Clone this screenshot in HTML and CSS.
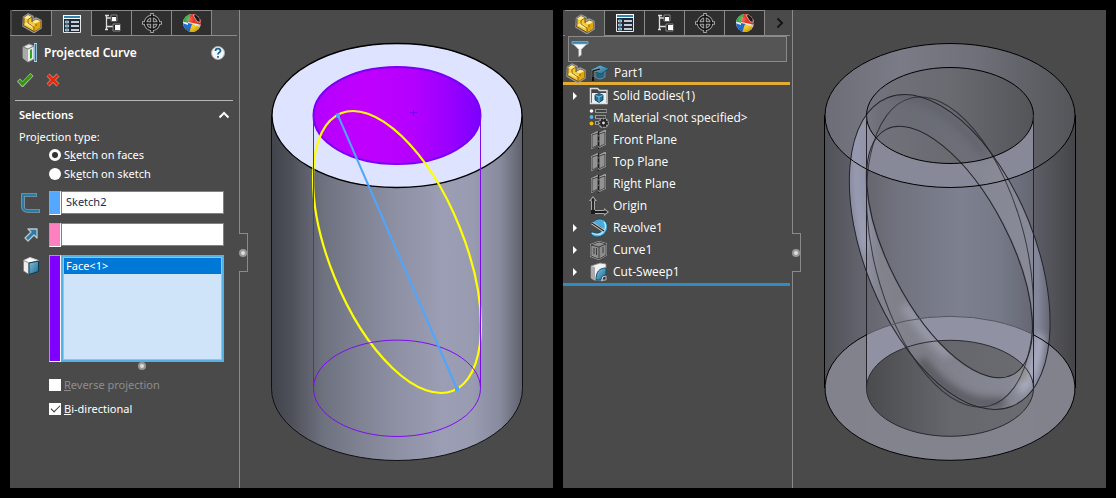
FILE: index.html
```html
<!DOCTYPE html>
<html lang="en">
<head>
    <meta charset="UTF-8" />
    <title>Projected Curve</title>
    <link rel="stylesheet" href="styles.css">
</head>
<body>

<!-- Shared icons -->
<svg class="sprite" aria-hidden="true">
    <defs>
        <linearGradient id="gold" x1="0" y1="0" x2="1" y2="1">
            <stop offset="0" stop-color="#ffe477" />
            <stop offset="1" stop-color="#f0b820" />
        </linearGradient>
        <linearGradient id="steel" x1="0" y1="0" x2="1" y2="1">
            <stop offset="0" stop-color="#7cc4e4" />
            <stop offset="1" stop-color="#1f668b" />
        </linearGradient>
        <radialGradient id="shine" cx="0.35" cy="0.3" r="0.7">
            <stop offset="0" stop-color="#fff" stop-opacity="0.3" />
            <stop offset="0.4" stop-color="#fff" stop-opacity="0" />
            <stop offset="1" stop-color="#000" stop-opacity="0.2" />
        </radialGradient>
        <clipPath id="ball"><circle cx="10" cy="10" r="9" /></clipPath>
    </defs>
    <symbol id="i-part" viewBox="0 0 20 20">
        <path d="M1.500 4L6 1l5 2.500v3L14 5l5 2.500V15l-7 4.500L1 13z" fill="#999" stroke="#999" stroke-width="1.500" stroke-linejoin="round" />
        <path d="M2 4.500L6 2l4 2v5l4-2.500L18.500 8v6.500L12 18.500 1.500 12.500l.5-2z" fill="#f7c633" stroke="#4a3605" stroke-width="0.800" stroke-linejoin="round" />
        <path d="M2 4.500L6 2l4 2-4 2.500zM10 9l4-2.500L18.500 8 14 10.500zM2 11l4-2 6 3.500-2 2z" fill="#ffec8e" />
        <path d="M14 10.500L18.500 8v6.500L12 18.500V14z" fill="#e2a614" />
        <path d="M6 6.500V10l6 4v4.500M14 10.500V13M6 6.500L10 4" fill="none" stroke="#6e500a" stroke-width="0.800" />
    </symbol>
    <symbol id="i-props" viewBox="0 0 20 20">
        <path d="M1.500 1.500h17v17h-17z" fill="#1d2b38" stroke="#e8e8e8" />
        <path d="M1 1h18v4H1z" fill="#fff" />
        <path d="M2 2h16v2H2z" fill="#2b86b4" />
        <path d="M3.500 7h3v2h-3zm0 4h3v2h-3zm0 4h3v2h-3z" fill="#2b86b4" stroke="#fff" stroke-width="0.600" />
        <path d="M9 8h8M9 12h8M9 16h8" stroke="#fff" stroke-width="1.500" />
    </symbol>
    <symbol id="i-config" viewBox="0 0 20 20">
        <path d="M3 2.500h4M3 16.500h3M4.500 2v15M5 5h5M5 13.500h6" stroke="#ddd" stroke-width="1.300" fill="none" />
        <path d="M9 2h6v6H9zM11 11h7v7h-7z" fill="#222" stroke="#888" />
        <path d="M10 4h4v4h-4zM13 12h5v5h-5z" fill="#fff" />
    </symbol>
    <symbol id="i-target" viewBox="0 0 20 20">
        <g fill="none" stroke="#a5a5a5" stroke-width="3.600">
            <circle cx="10" cy="10" r="6.500" />
            <path d="M10 0v20M0 10h20" />
        </g>
        <g fill="none" stroke="#111" stroke-width="1.600">
            <circle cx="10" cy="10" r="6.500" />
            <path d="M10 1v18M1 10h18" />
        </g>
    </symbol>
    <symbol id="i-ball" viewBox="0 0 20 20">
        <g clip-path="url(#ball)">
            <path d="M0 0h20v20H0z" fill="#f2f2f2" />
            <path d="M0 9V0h9L6 10z" fill="#2fa53c" />
            <path d="M9 0h11v12l-9-2-5-1z" fill="#e8301c" />
            <path d="M6 10l5 1-3 9-8-6V9z" fill="#1c66d0" />
            <path d="M10 11l10 4-4 5H7z" fill="#ffd012" />
            <path d="M0 8.500l6 1.500v2L0 10z" fill="#f5f5f5" />
            <path d="M11 2l3-.500 4 4 0 4-3-1z" fill="#111" stroke="#ddd" stroke-width="0.700" />
        </g>
        <circle cx="10" cy="10" r="9" fill="url(#shine)" />
    </symbol>
    <symbol id="i-plane" viewBox="0 0 20 20">
        <path d="M3 5l6-3v12l-6 4zM10 4l6-3v13l-6 3z" fill="#8d8d8d" stroke="#a8a8a8" stroke-width="2" stroke-linejoin="round" />
        <path d="M3 5l6-2v12l-6 3zM10 4l6-2v12l-6 3z" fill="#929292" stroke="#333" stroke-width="0.800" />
        <path d="M9.500 1v18" stroke="#1c1c1c" stroke-width="1.200" stroke-dasharray="4 1.500" />
    </symbol>
</svg>

<main class="desktop">
    <!-- Property manager -->
    <section class="window">
        <div class="panel">
            <nav class="tabs">
                <button type="button" class="tab" aria-label="Feature tree"><svg><use href="#i-part" /></svg></button>
                <button type="button" class="tab active" aria-label="Properties"><svg><use href="#i-props" /></svg></button>
                <button type="button" class="tab" aria-label="Configurations"><svg><use href="#i-config" /></svg></button>
                <button type="button" class="tab" aria-label="Dimensions"><svg><use href="#i-target" /></svg></button>
                <button type="button" class="tab" aria-label="Appearance"><svg><use href="#i-ball" /></svg></button>
            </nav>

            <form class="properties">
                <header class="title-row">
                    <svg class="title-icon" viewBox="0 0 16 20">
                        <path d="M1 4l6-3 5 2v13l-6 3-5-4z" fill="#e9e9e9" stroke="#999" />
                        <path d="M1 4l5 2v13l-5-4z" fill="#aaa" />
                        <path d="M1 4l5 2 6-3" fill="none" stroke="#777" />
                        <path d="M8 7l2-1v9l-2 1z" fill="#33a421" />
                        <path d="M13.500 0v19" stroke="#b5d8e8" stroke-width="3" />
                        <path d="M13.500 1v17" stroke="#216f9b" stroke-width="1.500" />
                    </svg>
                    <h1>Projected Curve</h1>
                    <button type="button" class="plain" aria-label="Help">
                        <svg class="help-icon" viewBox="0 0 14 14">
                            <circle cx="7" cy="7" r="6.500" fill="#f2f7fa" stroke="#aaa" />
                            <path d="M4.500 5c0-3 5-3 5-.3C9.500 6.500 7 6.300 7 8.500M7 10v1.800" fill="none" stroke="#17648f" stroke-width="1.800" />
                        </svg>
                    </button>
                </header>

                <div class="confirm-row">
                    <button type="button" class="plain" aria-label="OK">
                        <svg class="ok-icon" viewBox="0 0 17 15">
                            <path d="M1.500 8l4 4.500L15 2.500" fill="none" stroke="#a9b7a3" stroke-width="4.400" />
                            <path d="M2 8.500l3.500 3.500L14.500 3" fill="none" stroke="#2d9a08" stroke-width="2.800" />
                        </svg>
                    </button>
                    <button type="button" class="plain" aria-label="Cancel">
                        <svg class="cancel-icon" viewBox="0 0 14 14">
                            <path d="M2 2l10 10M12 2L2 12" stroke="#b9a29e" stroke-width="4" />
                            <path d="M2 2l10 10M12 2L2 12" stroke="#ea2806" stroke-width="2.800" />
                        </svg>
                    </button>
                </div>

                <div class="group-head">
                    <h2>Selections</h2>
                    <button type="button" class="plain" aria-label="Collapse">
                        <svg class="chevron" viewBox="0 0 12 8"><path d="M1.500 6.500L6 2l4.500 4.500" fill="none" stroke="#fff" stroke-width="2" /></svg>
                    </button>
                </div>

                <fieldset class="options">
                    <legend>Projection type:</legend>
                    <label><input type="radio" name="type" checked /><span>S<u>k</u>etch on faces</span></label>
                    <label><input type="radio" name="type" /><span>Sk<u>e</u>tch on sketch</span></label>
                </fieldset>

                <div class="pick">
                    <svg class="pick-icon" viewBox="0 0 20 20">
                        <path d="M16 2H2v11q0 5 5 5h12" fill="none" stroke="#9aabb3" stroke-width="3.600" />
                        <path d="M15.500 2H2v11q0 5 5 5h11.500" fill="none" stroke="#2a7ca5" stroke-width="2.400" />
                    </svg>
                    <span class="swatch blue"></span>
                    <input type="text" value="Sketch2" aria-label="Sketch to project" />
                </div>
                <div class="pick">
                    <svg class="pick-icon small" viewBox="0 0 16 16">
                        <path d="M2 12l6-6-3-3h9v9l-3-3-6 6z" fill="#2a7ca5" stroke="#b9c9d0" stroke-width="1.300" stroke-linejoin="round" />
                    </svg>
                    <span class="swatch pink"></span>
                    <input type="text" aria-label="Direction of projection" />
                </div>
                <div class="pick tall">
                    <svg class="pick-icon small" viewBox="0 0 16 18">
                        <path d="M.5 3.500L7 .500l8.500 3L6 6z" fill="#fff" stroke="#ccc" />
                        <path d="M.5 3.500L6 6v11.500L.5 14z" fill="#eee" stroke="#777" stroke-width="0.700" />
                        <path d="M6 6l9.500-2v10.500L6 17.500z" fill="url(#steel)" stroke="#12384d" />
                    </svg>
                    <span class="swatch purple"></span>
                    <select size="6" aria-label="Projection faces">
                        <option selected>Face&lt;1&gt;</option>
                    </select>
                </div>
                <div class="grip-row"><span class="dot"></span></div>

                <div class="checks">
                    <label class="disabled"><input type="checkbox" disabled /><span><u>R</u>everse projection</span></label>
                    <label><input type="checkbox" checked /><span><u>B</u>i-directional</span></label>
                </div>
            </form>
            <button type="button" class="splitter" aria-label="Hide panel"><span class="dot"></span></button>
        </div>

        <svg class="scene" viewBox="240 10 313 478" role="img" aria-label="Hollow cylinder with projected sketch">
            <defs>
                <linearGradient id="solid">
                    <stop offset="0" stop-color="#42444c" />
                    <stop offset="0.08" stop-color="#4e5059" />
                    <stop offset="0.2" stop-color="#6d707d" />
                    <stop offset="0.34" stop-color="#7e8191" />
                    <stop offset="0.5" stop-color="#8e91a4" />
                    <stop offset="0.68" stop-color="#9b9eb4" />
                    <stop offset="0.8" stop-color="#999cb1" />
                    <stop offset="0.91" stop-color="#888b9e" />
                    <stop offset="1" stop-color="#5e606b" />
                </linearGradient>
                <linearGradient id="bore">
                    <stop offset="0" stop-color="#b400ff" />
                    <stop offset="0.3" stop-color="#c000ff" />
                    <stop offset="0.6" stop-color="#b400ff" />
                    <stop offset="0.8" stop-color="#9c00ff" />
                    <stop offset="1" stop-color="#7c00ff" />
                </linearGradient>
            </defs>
            <path d="M271.500 115.500V388.500A125.500 72 0 0 0 522.500 388.500V115.500z" fill="url(#solid)" stroke="#111" />
            <ellipse cx="397" cy="115.500" rx="125" ry="72" fill="#dee4ff" stroke="#000" stroke-width="1.300" />
            <ellipse cx="397" cy="115.500" rx="83.500" ry="48.500" fill="url(#bore)" stroke="#7a00f5" stroke-width="2" />
            <path d="M410 112.500h7M413.500 109v7" stroke="#7a00f5" />
            <ellipse cx="397" cy="252" rx="149.600" ry="67.400" transform="rotate(68 397 252)" fill="none" stroke="#ff0" stroke-width="2.200" />
            <g fill="none" stroke="#7d0cf0">
                <ellipse cx="397" cy="388.300" rx="83.500" ry="48.200" />
                <path d="M313.500 115V388M480.500 115V388" />
            </g>
            <path d="M338 115.500L457 389" stroke="#4da6ff" stroke-width="2" />
            <path d="M336 113.500h4v4h-4zM455 387h4v4h-4z" fill="#4da6ff" />
        </svg>
    </section>

    <!-- Feature tree -->
    <section class="window">
        <div class="panel">
            <nav class="tabs">
                <button type="button" class="tab active" aria-label="Feature tree"><svg><use href="#i-part" /></svg></button>
                <button type="button" class="tab" aria-label="Properties"><svg><use href="#i-props" /></svg></button>
                <button type="button" class="tab" aria-label="Configurations"><svg><use href="#i-config" /></svg></button>
                <button type="button" class="tab" aria-label="Dimensions"><svg><use href="#i-target" /></svg></button>
                <button type="button" class="tab" aria-label="Appearance"><svg><use href="#i-ball" /></svg></button>
                <button type="button" class="plain more" aria-label="More tabs">
                    <svg viewBox="0 0 8 12"><path d="M1.500 1.500L6 6l-4.500 4.500" fill="none" stroke="#151515" stroke-width="2" /></svg>
                </button>
            </nav>

            <div class="filter">
                <svg viewBox="0 0 18 18">
                    <path d="M1 3l6.500 6.500V17l3-2V9.500L17 3z" fill="#eee" stroke="#888" stroke-width="0.600" />
                    <path d="M1 1.500h16V4H1z" fill="#2b86b4" stroke="#9cc6da" stroke-width="0.600" />
                    <path d="M5 5h8L9 9z" fill="#fff" />
                </svg>
                <input type="text" aria-label="Filter tree" />
            </div>

            <div class="root">
                <svg><use href="#i-part" /></svg>
                <svg viewBox="0 0 20 20">
                    <path d="M5 8v6q5 4 10 0V8z" fill="#28647f" stroke="#8fb3c2" stroke-width="0.600" />
                    <path d="M0 7l10-5 9 3.500L11 11z" fill="url(#steel)" stroke="#15465e" stroke-width="0.700" />
                    <path d="M10 6L3 8v8" fill="none" stroke="#888" stroke-width="2.400" />
                    <path d="M10 6L3 8v8" fill="none" stroke="#111" stroke-width="1.300" />
                    <path d="M2 14h2v4H2z" fill="#111" />
                </svg>
                <span>Part1</span>
            </div>

            <ul class="tree">
                <li>
                    <button type="button" class="arrow" aria-label="Expand Solid Bodies"></button>
                    <svg viewBox="0 0 20 20">
                        <path d="M1.500 17.500v-15h7l2 2h7.500v13z" fill="#444" stroke="#ddd" stroke-width="1.500" />
                        <path d="M3 7h14v10H3z" fill="#e9eef0" />
                        <path d="M6 9l4-1.500L14 9v5l-4 2.500L6 14z" fill="#1f7299" stroke="#0e3448" stroke-width="0.800" />
                        <path d="M6.500 9.500L10 11l3.500-1.500M10 11v5" fill="none" stroke="#9bd0e5" stroke-width="0.800" />
                    </svg>
                    <span>Solid Bodies(1)</span>
                </li>
                <li>
                    <svg viewBox="0 0 20 20">
                        <path d="M6 3h12M6 9h11M6 15h6" stroke="#aaa" stroke-width="3.400" />
                        <path d="M7 3h10.500M7 9h9.500M7 15h5" stroke="#222" stroke-width="1.600" />
                        <circle cx="2.500" cy="3" r="1.800" fill="#fff" />
                        <circle cx="2.500" cy="9" r="1.900" fill="#58b4e0" />
                        <circle cx="2.500" cy="15.500" r="2" fill="#f3b71f" />
                        <circle cx="14.500" cy="15" r="3" fill="none" stroke="#aaa" stroke-width="4.600" />
                        <circle cx="14.500" cy="15" r="3.800" fill="none" stroke="#222" stroke-width="1.600" stroke-dasharray="1.800 1.200" />
                        <circle cx="14.500" cy="15" r="2.400" fill="#ddd" stroke="#222" stroke-width="2" />
                    </svg>
                    <span>Material &lt;not specified&gt;</span>
                </li>
                <li><svg><use href="#i-plane" /></svg><span>Front Plane</span></li>
                <li><svg><use href="#i-plane" /></svg><span>Top Plane</span></li>
                <li><svg><use href="#i-plane" /></svg><span>Right Plane</span></li>
                <li>
                    <svg viewBox="0 0 20 20">
                        <path d="M4 3v13h12" fill="none" stroke="#aaa" stroke-width="4" />
                        <path d="M4 0l4 5H0zM20 16l-5 4v-8z" fill="#aaa" />
                        <path d="M4 4v12h12" fill="none" stroke="#1c1c1c" stroke-width="1.800" />
                        <path d="M4 1.500l2 3H2zM18.500 16l-3 2v-4zM2 14h4v4H2z" fill="#1c1c1c" />
                    </svg>
                    <span>Origin</span>
                </li>
                <li>
                    <button type="button" class="arrow" aria-label="Expand Revolve1"></button>
                    <svg viewBox="0 0 20 20">
                        <path d="M4 4q5-5 11-2 5 4 3 10-3 7-10 7-5 0-7-5l7 1q4 0 5-3 0-3-3-4L4 6z" fill="#4cabdb" stroke="#0f4a68" stroke-width="0.800" />
                        <path d="M3 15q7 4 12-2 3-5 0-9" fill="none" stroke="#b4e4f8" stroke-width="1.400" />
                        <path d="M3 5l12 8" stroke="#ccc" stroke-width="3" />
                        <path d="M3 5l12 8" stroke="#222" stroke-width="1.200" />
                    </svg>
                    <span>Revolve1</span>
                </li>
                <li>
                    <button type="button" class="arrow" aria-label="Expand Curve1"></button>
                    <svg viewBox="0 0 20 20">
                        <path d="M2 5l8-3 7 2v11l-7 4-8-3z" fill="#8c8c8c" stroke="#aaa" stroke-width="2" stroke-linejoin="round" />
                        <path d="M2 5l8-3 7 2v11l-7 4-8-3zM2 5l8 2 7-3M10 7v12M5 8v6M7.500 8v7M14 7v6" fill="none" stroke="#333" stroke-width="0.900" />
                    </svg>
                    <span>Curve1</span>
                </li>
                <li>
                    <button type="button" class="arrow" aria-label="Expand Cut-Sweep1"></button>
                    <svg viewBox="0 0 20 20">
                        <path d="M2 4l9-3 6 1v4l-3 13-9-1-3-2z" fill="#f2f2f2" stroke="#888" stroke-width="0.800" />
                        <path d="M2 4l4 1v13l-4-2z" fill="#aaa" />
                        <path d="M7 18C7 10 10 6 17 6v7q-5 0-5 5z" fill="url(#steel)" stroke="#12506f" />
                        <path d="M13 18q0-4 4-4v4z" fill="#333" stroke="#d5d5d5" stroke-width="0.800" />
                    </svg>
                    <span>Cut-Sweep1</span>
                </li>
            </ul>
            <button type="button" class="splitter" aria-label="Hide panel"><span class="dot"></span></button>
        </div>

        <svg class="scene" viewBox="793 10 313 478" role="img" aria-label="Transparent cylinder with swept cut">
            <defs>
                <linearGradient id="glass">
                    <stop offset="0" stop-color="#515257" />
                    <stop offset="0.17" stop-color="#65666f" />
                    <stop offset="0.3" stop-color="#71737f" />
                    <stop offset="0.54" stop-color="#7d808f" />
                    <stop offset="0.7" stop-color="#767987" />
                    <stop offset="0.83" stop-color="#656773" />
                    <stop offset="0.84" stop-color="#5c5d65" />
                    <stop offset="1" stop-color="#454548" />
                </linearGradient>
                <linearGradient id="lid">
                    <stop offset="0" stop-color="#6c6d77" />
                    <stop offset="0.3" stop-color="#7a7b86" />
                    <stop offset="0.6" stop-color="#6f7079" />
                    <stop offset="1" stop-color="#545559" />
                </linearGradient>
                <linearGradient id="hole">
                    <stop offset="0" stop-color="#72737c" />
                    <stop offset="0.5" stop-color="#696b71" />
                    <stop offset="1" stop-color="#535559" />
                </linearGradient>
                <linearGradient id="floor">
                    <stop offset="0" stop-color="#4b4b4e" />
                    <stop offset="0.5" stop-color="#65676d" />
                    <stop offset="1" stop-color="#6a6c72" />
                </linearGradient>
                <linearGradient id="tube" x1="850" y1="0" x2="1050" y2="0" gradientUnits="userSpaceOnUse">
                    <stop offset="0" stop-color="#82859a" />
                    <stop offset="0.07" stop-color="#9598ad" />
                    <stop offset="0.15" stop-color="#84858f" />
                    <stop offset="0.3" stop-color="#7f808a" />
                    <stop offset="0.7" stop-color="#878995" />
                    <stop offset="0.88" stop-color="#8b8d9a" />
                    <stop offset="0.94" stop-color="#888b9f" />
                    <stop offset="1" stop-color="#666874" />
                </linearGradient>
                <clipPath id="front"><path d="M867 115.500h166.500V388.500H867z" /></clipPath>
                <clipPath id="upper"><ellipse cx="950" cy="115.500" rx="83.500" ry="48" /></clipPath>
                <filter id="soft" x="-50%" y="-50%" width="200%" height="200%"><feGaussianBlur stdDeviation="4" /></filter>
                <clipPath id="ring">
                    <path clip-rule="evenodd" d="M887.400 97.800A166.300 84.900 68 1 0 1012 406.200A166.300 84.900 68 1 0 887.400 97.800zM886.200 129.400A138 60.300 62.700 1 0 1012.800 374.600A138 60.300 62.700 1 0 886.200 129.400z" />
                </clipPath>
            </defs>
            <path d="M824.500 115.500V388.500A125.500 72 0 0 0 1075.500 388.500V115.500z" fill="url(#glass)" />
            <ellipse cx="950" cy="115.500" rx="125" ry="72" fill="url(#lid)" />
            <ellipse cx="950" cy="115.500" rx="125" ry="72" fill="#878998" clip-path="url(#front)" />
            <ellipse cx="950" cy="115.500" rx="83.500" ry="48" fill="url(#hole)" />
            <ellipse cx="950" cy="388.300" rx="125" ry="72" fill="#81828c" />
            <ellipse cx="950" cy="388.300" rx="125" ry="72" fill="#9092a3" clip-path="url(#front)" />
            <path d="M867 388.300V442A125 72 0 0 0 1033.500 442V388.300z" fill="#82838d" />
            <ellipse cx="950" cy="388.300" rx="83.500" ry="48" fill="url(#floor)" />

            <!-- Swept groove -->
            <g clip-path="url(#ring)">
                <path d="M840 80h220v340H840z" fill="url(#tube)" opacity="0.9" />
                <path d="M840 60h220v130H840z" fill="#55565d" opacity="0.45" clip-path="url(#upper)" />
                <path d="M890 93Q945 98 985 155" fill="none" stroke="#505158" stroke-width="6" opacity="0.5" filter="url(#soft)" />
                <path d="M920 360Q960 412 1005 402" fill="none" stroke="#4a4b50" stroke-width="10" opacity="0.8" filter="url(#soft)" />
                <path d="M856 120Q851 190 866 250" fill="none" stroke="#a9acc4" stroke-width="8" opacity="0.7" filter="url(#soft)" />
                <path d="M1040 335Q1038 370 1020 392" fill="none" stroke="#b9bcd2" stroke-width="8" opacity="0.9" filter="url(#soft)" />
                <path d="M905 305Q925 335 950 355" fill="none" stroke="#a5a7b8" stroke-width="10" opacity="0.7" filter="url(#soft)" />
                <path d="M1018 368L1026 378" stroke="#8f8f82" stroke-width="10" opacity="0.7" filter="url(#soft)" />
            </g>
            <g fill="none" stroke="#24252b">
                <ellipse cx="949.700" cy="252" rx="166.300" ry="84.900" transform="rotate(68 949.700 252)" />
                <ellipse cx="950" cy="252" rx="158.800" ry="76.100" transform="rotate(75.700 950 252)" opacity="0.8" />
                <ellipse cx="949.500" cy="252" rx="138" ry="60.300" transform="rotate(62.700 949.500 252)" />
            </g>

            <g fill="none" stroke="#000">
                <ellipse cx="950" cy="115.500" rx="125" ry="72" />
                <ellipse cx="950" cy="115.500" rx="83.500" ry="48" />
                <path d="M824.500 115V388M1075.500 115V388" />
                <path d="M866.500 115V388M1033.500 115V388" stroke="#222228" />
                <path d="M867 334.500A125 72 0 1 0 1033 334.500" />
                <path d="M867 334.500A125 72 0 0 1 1033 334.500" stroke="#55565f" />
                <ellipse cx="950" cy="388.300" rx="83.500" ry="48" stroke="#2a2b30" />
            </g>
        </svg>
    </section>
</main>
</body>
</html>
```
FILE: styles.css
```css
/* Global Reset */
* {
    box-sizing: border-box;
    margin: 0;
    padding: 0;
}

body {
    font-family: "Noto Sans", "Open Sans", sans-serif;
    font-size: 12px;
    line-height: 16px;
    color: #fff;
    background: #000;
}

h1, h2 {
    font-size: 12px;
    font-weight: 600;
}

svg {
    display: block;
    flex: none;
}

.sprite {
    position: absolute;
    width: 0;
    height: 0;
}

.desktop {
    display: grid;
    grid-template-columns: 1fr 1fr;
    gap: 10px;
    min-height: 100vh;
    padding: 10px;
}

.window {
    display: grid;
    grid-template-columns: 230px 1fr;
    background: #4a4a4a;
}

.panel {
    position: relative;
    border-right: 1px solid #8a8a8a;
}

.scene {
    width: 100%;
    height: 100%;
}

/* Tabs */
.tabs {
    display: flex;
    height: 26px;
    padding-left: 2px;
    margin-right: 2px;
    border-bottom: 1px solid #8a8a8a;
}

.tab {
    display: flex;
    align-items: center;
    justify-content: center;
    width: 40px;
    height: 25px;
    background: #2f2f2f;
    border: 1px solid #8a8a8a;
    border-width: 1px 1px 0 0;
}

.tab.active {
    height: 26px;
    background: #4a4a4a;
}

.tab svg {
    width: 20px;
    height: 20px;
}

.plain {
    background: none;
    border: none;
}

.more {
    margin-left: auto;
    padding-right: 6px;
}

.more svg {
    width: 8px;
    height: 12px;
}

/* Property manager */
.properties {
    padding: 0 6px 0 5px;
}

.title-row {
    display: flex;
    align-items: center;
    height: 33px;
    padding: 0 8px 0 7px;
}

.title-row h1 {
    flex: 1;
    margin-left: 6px;
}

.title-icon {
    width: 16px;
    height: 20px;
}

.help-icon,
.cancel-icon {
    width: 14px;
    height: 14px;
}

.confirm-row {
    display: flex;
    align-items: center;
    gap: 12px;
    height: 32px;
    padding: 0 2px 10px;
    border-bottom: 1px solid #b4b4b4;
}

.ok-icon {
    width: 17px;
    height: 15px;
}

.group-head {
    display: flex;
    align-items: center;
    justify-content: space-between;
    height: 28px;
    padding: 0 3px 0 4px;
}

.group-head h2 {
    font-size: 11px;
}

.chevron {
    width: 12px;
    height: 8px;
}

.options {
    border: none;
    font-size: 11px;
}

.options legend {
    height: 16px;
    margin-left: 4px;
}

.options label,
.checks label {
    display: flex;
    align-items: center;
    gap: 3px;
    height: 19px;
    margin-left: 34px;
}

input[type="radio"] {
    appearance: none;
    width: 12px;
    height: 12px;
    background: #fff;
    border-radius: 50%;
}

input[type="radio"]:checked {
    background: #333;
    border: 3px solid #fff;
}

.pick {
    display: grid;
    grid-template-columns: 34px 12px 1fr;
    height: 24px;
    margin: 8px 9px 0 0;
}

.pick-icon {
    width: 20px;
    height: 20px;
    margin: 2px 0 0 6px;
}

.pick-icon.small {
    width: 16px;
    height: 18px;
    margin-left: 8px;
}

.swatch {
    border: 1px solid #fff;
    border-top-color: #a0a0a0;
    border-left-color: #a0a0a0;
}

.blue {
    background: #55a8ff;
}

.pink {
    background: #ff80c0;
}

.purple {
    background: #8000ff;
}

.pick input {
    min-width: 0;
    height: 23px;
    padding: 0 4px 2px;
    font: inherit;
    font-size: 11px;
    color: #222a4a;
    background: #fff;
    border: 1px solid #7a7f9a;
}

.pick.tall {
    height: 107px;
}

.pick select {
    min-width: 0;
    height: 107px;
    font: inherit;
    font-size: 11px;
    color: #fff;
    background: #cfe4f8;
    border: 2px solid #55b0e4;
    outline: 1px solid #8cc6f0;
    outline-offset: -3px;
    border-radius: 0;
    padding: 1px;
    overflow: hidden;
    appearance: none;
}

.pick option {
    min-height: 16px;
    padding: 0 2px;
    line-height: 16px;
    color: #fff;
}

.pick option:checked {
    color: #fff;
    background: #0078d7 linear-gradient(#0078d7, #0078d7);
}

.grip-row {
    display: flex;
    justify-content: center;
    padding: 0 0 0 36px;
}

.dot {
    display: block;
    width: 8px;
    height: 8px;
    background: #ddd;
    border: 2px solid #999;
    border-radius: 50%;
}

.checks {
    display: flex;
    flex-direction: column;
    gap: 5px;
    padding-top: 5px;
    font-size: 11px;
}

.checks .disabled {
    color: #8d8d8d;
}

input[type="checkbox"] {
    appearance: none;
    width: 12px;
    height: 12px;
    background: #fff;
}

input[type="checkbox"]:checked::before {
    content: "";
    display: block;
    width: 8px;
    height: 4px;
    margin: 2px;
    border: solid #333;
    border-width: 0 0 1px 1px;
    transform: rotate(-45deg);
}

/* Handle on the panel edge */
.splitter {
    position: absolute;
    top: 223px;
    right: -9px;
    display: flex;
    align-items: center;
    width: 9px;
    height: 39px;
    background: #4a4a4a;
    border: 1px solid #8a8a8a;
    border-left: none;
}

/* Feature tree */
.filter {
    display: flex;
    align-items: center;
    height: 26px;
    margin: 0 5px;
    padding-left: 2px;
    background: #555;
    border: 1px solid #8a8a8a;
}

.filter svg {
    width: 18px;
    height: 18px;
}

.filter input {
    flex: 1;
    min-width: 0;
    font: inherit;
    color: #fff;
    background: none;
    border: none;
}

.root,
.tree {
    font-family: "Open Sans", "Noto Sans", sans-serif;
}

.root {
    display: flex;
    align-items: center;
    gap: 4px;
    height: 23px;
    margin-right: 2px;
    padding: 2px 0 0 3px;
    border-bottom: 3px solid #e5ac33;
}

.root svg,
.tree svg {
    width: 20px;
    height: 20px;
}

.tree {
    margin-right: 2px;
    list-style: none;
    border-bottom: 3px solid #2f8cc4;
}

.tree li {
    display: flex;
    align-items: center;
    gap: 4px;
    height: 22px;
    padding-left: 26px;
}

.arrow {
    width: 4px;
    height: 8px;
    margin-left: -16px;
    margin-right: 8px;
    background: #fff;
    border: none;
    clip-path: polygon(0 0, 100% 50%, 0 100%);
}
```
